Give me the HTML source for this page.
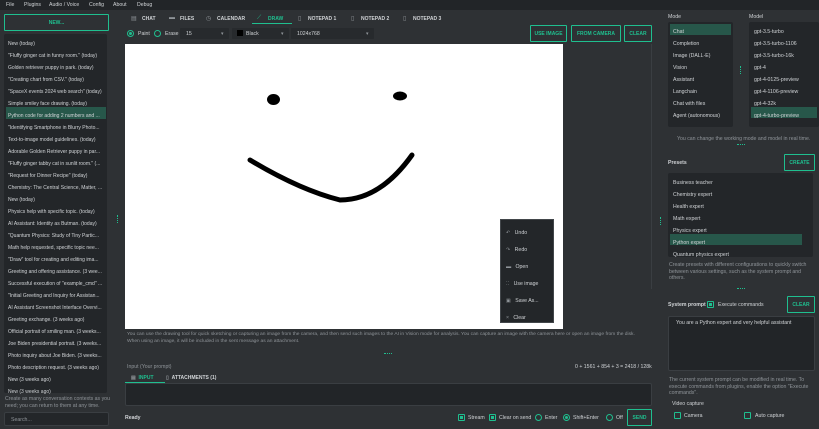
<!DOCTYPE html>
<html><head><meta charset="utf-8"><style>
*{box-sizing:border-box;margin:0;padding:0}
body{width:819px;height:429px;overflow:hidden;background:#2e3134;font-family:"Liberation Sans",sans-serif;color:#d0d3d6;font-size:5.2px;position:relative}
.a{position:absolute;white-space:nowrap}
.menu{left:0;top:0;width:819px;height:10px;background:#222528}
.btn{position:absolute;border:1px solid #1fbf8f;color:#1fbf8f;font-weight:bold;display:flex;align-items:center;justify-content:center;font-size:5px;border-radius:1px}
.list{position:absolute;background:#232629;border-radius:2px}
.sel{position:absolute;background:#27574a}
.muted{color:#8f9499}
.cb{position:absolute;width:7px;height:7px;border:1px solid #1fbf8f;border-radius:1px}
.cb.on::after{content:"";position:absolute;left:1px;top:1px;width:3px;height:3px;background:#1fbf8f}
.rd{position:absolute;width:7px;height:7px;border:1px solid #1fbf8f;border-radius:50%}
.rd.on::after{content:"";position:absolute;left:1px;top:1px;width:3px;height:3px;background:#1fbf8f;border-radius:50%}
.sl{position:absolute;background:#272a2d;height:11px;border-radius:1px}
.dots{position:absolute;width:8px;border-top:1px dotted #1fbf8f}
.tab{position:absolute;top:16px;font-weight:bold;font-size:5px;white-space:nowrap}
.ti{position:absolute;top:15px;color:#8f9499;font-size:6px}
</style></head><body>
<div class="a menu"></div>
<div class="a" style="left:6px;top:2px">File</div>
<div class="a" style="left:24px;top:2px">Plugins</div>
<div class="a" style="left:49px;top:2px">Audio / Voice</div>
<div class="a" style="left:89px;top:2px">Config</div>
<div class="a" style="left:113px;top:2px">About</div>
<div class="a" style="left:137px;top:2px">Debug</div>

<div class="btn" style="left:4px;top:14px;width:105px;height:17px">NEW...</div>
<div class="list" style="left:4px;top:34px;width:103px;height:359px"></div>
<div class="sel" style="left:6px;top:107px;width:100px;height:12px"></div>
<div class="a" style="left:8px;top:38px;line-height:12px;font-size:5px">
New (today)<br>"Fluffy ginger cat in funny room." (today)<br>Golden retriever puppy in park. (today)<br>"Creating chart from CSV." (today)<br>"SpaceX events 2024 web search" (today)<br>Simple smiley face drawing. (today)<br>Python code for adding 2 numbers and ...<br>"Identifying Smartphone in Blurry Photo...<br>Text-to-image model guidelines. (today)<br>Adorable Golden Retriever puppy in par...<br>"Fluffy ginger tabby cat in sunlit room." (...<br>"Request for Dinner Recipe" (today)<br>Chemistry: The Central Science, Matter, ...<br>New (today)<br>Physics help with specific topic. (today)<br>AI Assistant: Identity as Butman. (today)<br>"Quantum Physics: Study of Tiny Partic...<br>Math help requested, specific topic nee...<br>"Draw" tool for creating and editing ima...<br>Greeting and offering assistance. (3 wee...<br>Successful execution of "example_cmd" ...<br>"Initial Greeting and Inquiry for Assistan...<br>AI Assistant Screenshot Interface Overvi...<br>Greeting exchange. (3 weeks ago)<br>Official portrait of smiling man. (3 weeks...<br>Joe Biden presidential portrait. (3 weeks...<br>Photo inquiry about Joe Biden. (3 weeks...<br>Photo description request. (3 weeks ago)<br>New (3 weeks ago)<br>New (3 weeks ago)</div>
<div class="a muted" style="left:5px;top:396px;line-height:7px">Create as many conversation contexts as you<br>need; you can return to them at any time.</div>
<div class="a" style="left:4px;top:412px;width:105px;height:14px;background:#232629;border:1px solid #3a3e42;border-radius:2px;padding:4px 6px" ><span class="muted">Search...</span></div>
<div class="dots" style="left:117px;top:215px;width:1px;height:8px;border-top:0;border-left:1px dotted #1fbf8f"></div>

<!-- tabs -->
<div class="ti" style="left:131px">▤</div><div class="tab" style="left:142px">CHAT</div>
<div class="ti" style="left:169px">▬</div><div class="tab" style="left:180px">FILES</div>
<div class="ti" style="left:206px">◷</div><div class="tab" style="left:217px">CALENDAR</div>
<div class="ti" style="left:257px;color:#1fbf8f">⟋</div><div class="tab" style="left:268px;color:#1fbf8f">DRAW</div>
<div class="ti" style="left:298px">▯</div><div class="tab" style="left:308px">NOTEPAD 1</div>
<div class="ti" style="left:351px">▯</div><div class="tab" style="left:361px">NOTEPAD 2</div>
<div class="ti" style="left:403px">▯</div><div class="tab" style="left:413px">NOTEPAD 3</div>
<div class="a" style="left:252px;top:23px;width:40px;height:1px;background:#1fbf8f"></div>

<div class="rd on" style="left:127px;top:30px"></div><div class="a" style="left:138px;top:31px">Paint</div>
<div class="rd" style="left:154px;top:30px"></div><div class="a" style="left:165px;top:31px">Erase</div>
<div class="sl" style="left:180px;top:28px;width:49px"></div><div class="a" style="left:186px;top:31px">15</div><div class="a muted" style="left:221px;top:31px">▾</div>
<div class="sl" style="left:232px;top:28px;width:57px"></div><div class="a" style="left:237px;top:30px;width:6px;height:6px;background:#000"></div><div class="a" style="left:246px;top:31px">Black</div><div class="a muted" style="left:281px;top:31px">▾</div>
<div class="sl" style="left:291px;top:28px;width:83px"></div><div class="a" style="left:297px;top:31px">1024x768</div><div class="a muted" style="left:366px;top:31px">▾</div>

<div class="btn" style="left:530px;top:25px;width:37px;height:17px">USE IMAGE</div>
<div class="btn" style="left:571px;top:25px;width:50px;height:17px">FROM CAMERA</div>
<div class="btn" style="left:624px;top:25px;width:28px;height:17px">CLEAR</div>

<div class="a" style="left:125px;top:44px;width:438px;height:285px;background:#fff"></div>
<svg class="a" style="left:0;top:0" width="819" height="429"><ellipse cx="273.5" cy="99.5" rx="6.5" ry="5.5" fill="#000"/><ellipse cx="400" cy="96" rx="7" ry="4.5" fill="#000"/><path d="M250 160 Q300 190 340 200 Q380 200 412 155" stroke="#000" stroke-width="5" fill="none" stroke-linecap="round"/></svg>
<div class="a" style="left:651px;top:44px;width:1px;height:245px;background:#3a3e42"></div>

<div class="a" style="left:500px;top:219px;width:54px;height:104px;background:#232629;border:1px solid #42464a"></div>
<div class="a" style="left:506px;top:225px;line-height:17px"><span class="muted">↶</span>&nbsp;&nbsp;&nbsp;Undo<br><span class="muted">↷</span>&nbsp;&nbsp;&nbsp;Redo<br><span class="muted">▬</span>&nbsp;&nbsp;&nbsp;Open<br><span class="muted">⁚⁚</span>&nbsp;&nbsp;&nbsp;Use image<br><span class="muted">▣</span>&nbsp;&nbsp;&nbsp;Save As...<br><span class="muted">×</span>&nbsp;&nbsp;&nbsp;Clear</div>

<div class="a muted" style="left:127px;top:332px;line-height:6.5px;font-size:4.9px">You can use the drawing tool for quick sketching or capturing an image from the camera, and then send such images to the AI in Vision mode for analysis. You can capture an image with the camera here or open an image from the disk.<br>When using an image, it will be included in the sent message as an attachment.</div>
<div class="dots" style="left:384px;top:353px"></div>
<div class="a muted" style="left:127px;top:364px">Input (Your prompt)</div>
<div class="a" style="left:575px;top:364px">0 + 1561 + 854 + 3 = 2418 / 128k</div>
<div class="a" style="left:131px;top:375px;font-weight:bold;font-size:5px"><span class="muted">▤</span>&nbsp;&nbsp;<span style="color:#1fbf8f">INPUT</span>&nbsp;&nbsp;&nbsp;&nbsp;&nbsp;&nbsp;&nbsp;&nbsp;&nbsp;<span class="muted">▯</span>&nbsp;&nbsp;ATTACHMENTS (1)</div>
<div class="a" style="left:125px;top:382px;width:40px;height:1px;background:#1fbf8f"></div>
<div class="a" style="left:125px;top:383px;width:527px;height:23px;background:#222528;border:1px solid #3a3e42;border-radius:2px"></div>
<div class="a" style="left:125px;top:415px;font-weight:bold">Ready</div>
<div class="cb on" style="left:458px;top:414px"></div><div class="a" style="left:468px;top:415px">Stream</div>
<div class="cb on" style="left:489px;top:414px"></div><div class="a" style="left:499px;top:415px">Clear on send</div>
<div class="rd" style="left:535px;top:414px"></div><div class="a" style="left:545px;top:415px">Enter</div>
<div class="rd on" style="left:563px;top:414px"></div><div class="a" style="left:573px;top:415px">Shift+Enter</div>
<div class="rd" style="left:606px;top:414px"></div><div class="a" style="left:616px;top:415px">Off</div>
<div class="btn" style="left:627px;top:409px;width:25px;height:17px">SEND</div>

<!-- right -->
<div class="dots" style="left:660px;top:217px;width:1px;height:8px;border-top:0;border-left:1px dotted #1fbf8f"></div>
<div class="a" style="left:668px;top:14px">Mode</div>
<div class="a" style="left:749px;top:14px">Model</div>
<div class="list" style="left:668px;top:22px;width:65px;height:105px"></div>
<div class="sel" style="left:670px;top:24px;width:61px;height:11px"></div>
<div class="a" style="left:673px;top:26px;line-height:12px">Chat<br>Completion<br>Image (DALL-E)<br>Vision<br>Assistant<br>Langchain<br>Chat with files<br>Agent (autonomous)</div>
<div class="dots" style="left:740px;top:66px;width:1px;height:8px;border-top:0;border-left:1px dotted #1fbf8f"></div>
<div class="list" style="left:749px;top:22px;width:70px;height:105px"></div>
<div class="sel" style="left:751px;top:107px;width:66px;height:11px"></div>
<div class="a" style="left:754px;top:26px;line-height:12px">gpt-3.5-turbo<br>gpt-3.5-turbo-1106<br>gpt-3.5-turbo-16k<br>gpt-4<br>gpt-4-0125-preview<br>gpt-4-1106-preview<br>gpt-4-32k<br>gpt-4-turbo-preview</div>
<div class="a muted" style="left:677px;top:136px">You can change the working mode and model in real time.</div>
<div class="dots" style="left:737px;top:144px"></div>
<div class="a" style="left:668px;top:160px;font-weight:bold">Presets</div>
<div class="btn" style="left:784px;top:154px;width:31px;height:17px">CREATE</div>
<div class="list" style="left:668px;top:173px;width:145px;height:84px"></div>
<div class="sel" style="left:670px;top:234px;width:132px;height:11px"></div>
<div class="a" style="left:673px;top:177px;line-height:12px">Business teacher<br>Chemistry expert<br>Health expert<br>Math expert<br>Physics expert<br>Python expert<br>Quantum physics expert</div>
<div class="a muted" style="left:669px;top:262px;line-height:6.5px">Create presets with different configurations to quickly switch<br>between various settings, such as the system prompt and<br>others.</div>
<div class="dots" style="left:737px;top:288px"></div>
<div class="a" style="left:668px;top:302px;font-weight:bold">System prompt</div>
<div class="cb on" style="left:707px;top:301px"></div><div class="a" style="left:718px;top:302px">Execute commands</div>
<div class="btn" style="left:787px;top:296px;width:28px;height:17px">CLEAR</div>
<div class="a" style="left:668px;top:316px;width:147px;height:55px;background:#222528;border:1px solid #3a3e42;border-radius:2px"></div>
<div class="a" style="left:676px;top:320px">You are a Python expert and very helpful assistant</div>
<div class="a muted" style="left:669px;top:377px;line-height:6.5px">The current system prompt can be modified in real time. To<br>execute commands from plugins, enable the option "Execute<br>commands".</div>
<div class="a" style="left:672px;top:401px">Video capture</div>
<div class="cb" style="left:674px;top:412px"></div><div class="a" style="left:684px;top:413px">Camera</div>
<div class="cb" style="left:744px;top:412px"></div><div class="a" style="left:755px;top:413px">Auto capture</div>
</body></html>
